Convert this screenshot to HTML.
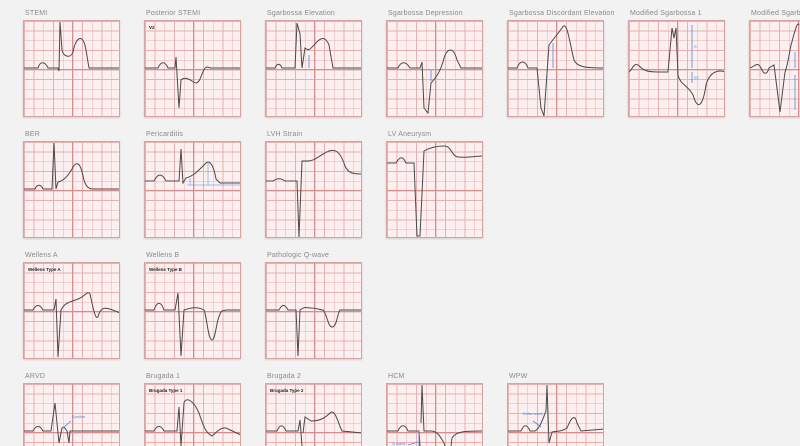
<!DOCTYPE html>
<html style="width:800px;height:446px;overflow:hidden"><head><meta charset="utf-8"><style>
html,body{margin:0;width:800px;height:446px;overflow:hidden}
body{background:#f2f2f2;position:relative;font-family:"Liberation Sans",sans-serif}
.l{position:absolute;font-size:7px;color:#8a8a8a;letter-spacing:.2px;white-space:nowrap}
.c{position:absolute;width:97px;height:97px;box-sizing:border-box;border:1px solid #d9a3a3;box-shadow:0 1px 2px rgba(0,0,0,.15);overflow:hidden;
background:
linear-gradient(#d38f8f,#d38f8f) 47.5px 0/1px 100% no-repeat,
linear-gradient(#d38f8f,#d38f8f) 0 47.5px/100% 1px no-repeat,
repeating-linear-gradient(90deg,#e8b0b0 0 0.8px,transparent 0.8px 9.7px),
repeating-linear-gradient(180deg,#e8b0b0 0 0.8px,transparent 0.8px 9.7px),#fcefef}
.r4{height:63px;border-bottom:none;box-shadow:none}
.c svg{position:absolute;left:-1px;top:-1px}
.t{position:absolute;left:4px;top:4px;font-size:4.5px;font-weight:bold;color:#222}
path{fill:none;stroke:#4a4a4a;stroke-width:1}
.b{stroke:#4a8be0;stroke-width:.8}
.bt{font-size:4px;fill:#4a8be0}
</style></head><body>
<div class="l" style="left:25px;top:10px">STEMI</div>
<div class="l" style="left:146px;top:10px">Posterior STEMI</div>
<div class="l" style="left:267px;top:10px">Sgarbossa Elevation</div>
<div class="l" style="left:388px;top:10px">Sgarbossa Depression</div>
<div class="l" style="left:509px;top:10px">Sgarbossa Discordant Elevation</div>
<div class="l" style="left:630px;top:10px">Modified Sgarbossa 1</div>
<div class="l" style="left:751px;top:10px">Modified Sgarbossa 2</div>
<div class="l" style="left:25px;top:131px">BER</div>
<div class="l" style="left:146px;top:131px">Pericarditis</div>
<div class="l" style="left:267px;top:131px">LVH Strain</div>
<div class="l" style="left:388px;top:131px">LV Aneurysm</div>
<div class="l" style="left:25px;top:252px">Wellens A</div>
<div class="l" style="left:146px;top:252px">Wellens B</div>
<div class="l" style="left:267px;top:252px">Pathologic Q-wave</div>
<div class="l" style="left:25px;top:373px">ARVD</div>
<div class="l" style="left:146px;top:373px">Brugada 1</div>
<div class="l" style="left:267px;top:373px">Brugada 2</div>
<div class="l" style="left:388px;top:373px">HCM</div>
<div class="l" style="left:509px;top:373px">WPW</div>

<div class="c" style="left:23px;top:20px"><svg width="97" height="97"><path d="M0 48H15C17 41 22 41 25 48H35L36 51L37 2L39 30C41 38 48 38 50 32C53 17 60 12 63 30L66 48H97"/></svg></div>
<div class="c" style="left:144px;top:20px"><div class="t">V2</div><svg width="97" height="97"><path d="M0 48H14C17 41 21 41 24 48H31L32 37L35 88L37 60C42 55 48 62 52 63C57 63 58 48 63 47L67 48H97"/></svg></div>
<div class="c" style="left:265px;top:20px"><svg width="97" height="97"><path d="M0 48H10C12 43 15 43 17 48H30L32 3L35 14L37 48L40 28C44 32 46 28 50 24C55 18 60 15 64 25L68 48H97"/><path class="b" d="M44 35V48"/></svg></div>
<div class="c" style="left:386px;top:20px"><svg width="97" height="97"><path d="M0 48H12C15 41 20 41 24 48H34L36 42L38 88L42 93L45 63C50 58 54 52 57 42C60 28 67 25 71 40L75 48H97"/><path class="b" d="M45 50V61"/></svg></div>
<div class="c" style="left:507px;top:20px"><svg width="97" height="97"><path d="M0 48H10C13 40 18 40 21 48H30L34 88L37 96L42 25C47 18 50 15 55 8C60-2 63 25 67 40C70 47 78 48 97 48"/><path class="b" d="M46 23V48"/></svg></div>
<div class="c" style="left:628px;top:20px"><svg width="97" height="97"><path d="M0 52C4 52 5 42 10 45C14 48 14 52 30 52H40L44 8L46 18L48 8L50 55C52 65 60 65 65 75C70 92 75 85 78 65C82 50 92 50 97 52"/><path class="b" d="M64 5V48M64 52V63"/><text class="bt" x="66" y="28">S</text><text class="bt" x="66" y="59">ST</text></svg></div>
<div class="c" style="left:749px;top:20px"><svg width="97" height="97"><path d="M0 48C5 48 8 40 12 48C15 55 18 55 20 48L25 45L31 92L36 52C38 48 40 35 42 25C45 15 48 0 50 5"/><path class="b" d="M46 32V48M46 55V90"/></svg></div>

<div class="c" style="left:23px;top:141px"><svg width="97" height="97"><path d="M0 48H12C14 43 18 43 20 48H29L31 2L33 48L35 41C40 40 45 35 49 28C53 20 57 20 60 35C62 46 66 48 70 48H97"/></svg></div>
<div class="c" style="left:144px;top:141px"><svg width="97" height="97"><path d="M0 40H10C14 32 18 32 22 40H35L37 8L39 42L42 37C50 35 56 28 62 22C66 18 70 26 72 38L76 42H97"/><path class="b" d="M46 37V44M64 22V44M43 44H97" style="stroke-width:.5"/></svg></div>
<div class="c" style="left:265px;top:141px"><svg width="97" height="97"><path d="M0 40H8C12 37 16 37 20 40H32L34 96L37 20L42 20C50 20 52 16 60 12C70 6 75 10 80 25C83 32 88 33 97 33"/></svg></div>
<div class="c" style="left:386px;top:141px"><svg width="97" height="97"><path d="M0 22H10C14 15 17 15 20 22H28L31 95L34 95L38 10C45 6 52 5 58 5C66 5 65 15 72 16C80 17 90 15 97 15"/></svg></div>

<div class="c" style="left:23px;top:262px"><div class="t">Wellens Type A</div><svg width="97" height="97"><path d="M0 48H10C13 42 17 42 20 48H31L33 37L35 95L38 48C42 40 48 40 55 37C62 35 64 28 67 32C70 45 72 58 75 55C78 42 85 46 97 51"/></svg></div>
<div class="c" style="left:144px;top:262px"><div class="t">Wellens Type B</div><svg width="97" height="97"><path d="M0 48H10C13 39 17 39 20 48H31L34 31L37 94L40 48C48 45 55 45 60 48C63 55 64 78 68 78C72 78 72 55 78 49L82 48H97"/></svg></div>
<div class="c" style="left:265px;top:262px"><svg width="97" height="97"><path d="M0 48H14C17 42 20 42 23 48H31L33 94L35 48C40 44 42 46 46 46C52 46 55 48 58 48C62 52 63 65 67 65C72 65 72 52 75 48H97"/></svg></div>

<div class="c r4" style="left:23px;top:383px"><svg width="97" height="63"><path d="M0 48H10C13 42 17 42 20 48H28L32 20L36 60L39 45L41 44L44 48L46 60L47 48H97"/><path class="b" d="M40 45L48 38"/><text class="bt" x="49" y="35">Epsilon</text></svg></div>
<div class="c r4" style="left:144px;top:383px"><div class="t">Brugada Type 1</div><svg width="97" height="63"><path d="M0 48H10C13 42 17 42 20 48H33L35 24L37 63L40 20C42 13 50 18 55 30C60 45 62 50 68 53C72 50 78 42 84 46L97 52"/></svg></div>
<div class="c r4" style="left:265px;top:383px"><div class="t">Brugada Type 2</div><svg width="97" height="63"><path d="M0 48H12C15 41 18 41 21 48H33L35 37L37 63M38 50L40 34L46 38C55 38 60 35 65 30C70 25 73 40 77 48L97 50"/></svg></div>
<div class="c r4" style="left:386px;top:383px"><svg width="97" height="63"><path d="M0 48H12C15 41 19 41 22 48H33L34 63M35 40L36 2L38 48L45 48C52 48 55 55 58 60L59 63M65 63L66 55C70 48 80 48 97 48"/><path class="b" d="M33 48V63M22 62L32 59"/><text class="bt" x="6" y="62">Q wave</text></svg></div>
<div class="c r4" style="left:507px;top:383px"><svg width="97" height="63"><path d="M0 48H14C17 41 20 41 23 48H28C33 45 35 38 39 28L40 2L42 60L45 49C52 48 56 48 60 45C64 35 68 30 70 40L74 48L97 46"/><path class="b" d="M26 38L34 44"/><text class="bt" x="16" y="32">Delta wave</text></svg></div>
</body></html>
